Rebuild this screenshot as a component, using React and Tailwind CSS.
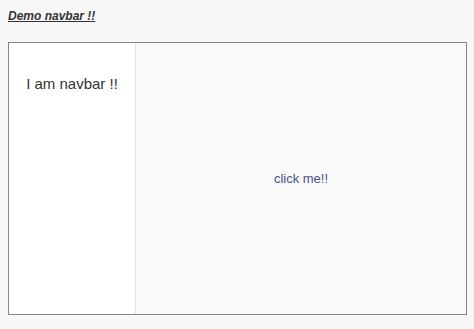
export default function App() {
  return (
    <div className="min-h-[329px] w-full bg-[#f7f7f7] pt-[9px] px-2 font-['Liberation_Sans',Arial,sans-serif] text-[#333]">
      <h1 className="text-[12px] font-bold italic underline leading-[14px]">Demo navbar !!</h1>
      <div className="mt-[19px] flex h-[273px] w-[459px] border-[1.5px] border-[#858585]">
        <nav className="w-[127px] shrink-0 bg-white border-r border-[#e2e2e2] pt-[29px] text-center">
          <span className="text-[15px] leading-[18px]">I am navbar !!</span>
        </nav>
        <main className="flex flex-1 items-center justify-center bg-[#f9f9fa]">
          <button className="text-[13px] text-[#4b5088]">click me!!</button>
        </main>
      </div>
    </div>
  );
}
